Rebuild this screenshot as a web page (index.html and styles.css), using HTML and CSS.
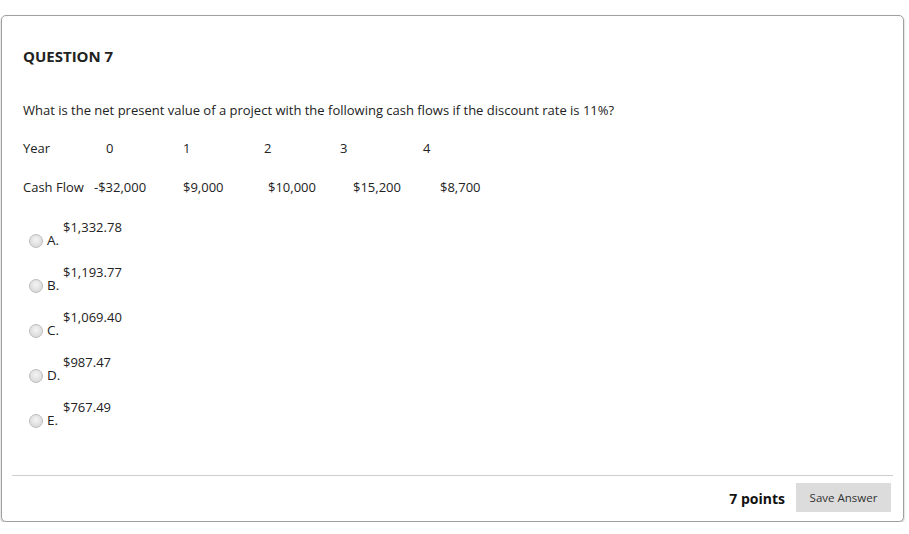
FILE: index.html
```html
<!DOCTYPE html>
<html>
<head>
<meta charset="utf-8">
<link rel="stylesheet" href="styles.css">
</head>
<body>
<div class="card">
  <div class="content">
    <h2 class="qtitle">QUESTION 7</h2>
    <p class="qtext">What is the net present value of a project with the following cash flows if the discount rate is 11%?</p>
    <div class="flows">
      <div class="cell">Year</div>
      <div class="cell y1">0</div>
      <div class="cell">1</div>
      <div class="cell">2</div>
      <div class="cell">3</div>
      <div class="cell">4</div>
      <div class="cell cf">Cash Flow</div>
      <div class="cell cf">-$32,000</div>
      <div class="cell cf">$9,000</div>
      <div class="cell cf c3">$10,000</div>
      <div class="cell cf c4">$15,200</div>
      <div class="cell cf c5">$8,700</div>
    </div>
    <ul class="answers">
      <li class="answer"><span class="radio"></span><span class="letter">A.</span><span class="value">$1,332.78</span></li>
      <li class="answer"><span class="radio"></span><span class="letter">B.</span><span class="value">$1,193.77</span></li>
      <li class="answer"><span class="radio"></span><span class="letter">C.</span><span class="value">$1,069.40</span></li>
      <li class="answer"><span class="radio"></span><span class="letter">D.</span><span class="value">$987.47</span></li>
      <li class="answer"><span class="radio"></span><span class="letter">E.</span><span class="value">$767.49</span></li>
    </ul>
  </div>
  <div class="footer">
    <span class="points">7 points</span>
    <button class="save">Save Answer</button>
  </div>
</div>
</body>
</html>
```
FILE: styles.css
```css
html, body {
  margin: 0;
  background: #fff;
}
body {
  padding: 15px 5px 0 1px;
  font-family: "Open Sans", "DejaVu Sans", sans-serif;
  color: #222;
  font-size: 13px;
}
.card {
  width: 901px;
  height: 505px;
  border: 1px solid #a0a0a0;
  border-radius: 5px;
  box-shadow: 0 1px 2px rgba(0,0,0,0.35);
  display: flex;
  flex-direction: column;
  box-sizing: content-box;
}
.content {
  flex: 1;
  padding: 0 0 0 21px;
}
.qtitle {
  margin: 29px 0 0;
  font-size: 15px;
  font-weight: 700;
  line-height: 22px;
  color: #222;
}
.qtext {
  margin: 34px 0 0;
  line-height: 18px;
}
.flows {
  margin-top: 20px;
  display: grid;
  grid-template-columns: 71px 89px 81px 76px 83px 60px;
  grid-auto-rows: 18px;
  row-gap: 21px;
  line-height: 18px;
}
.y1 { padding-left: 12px; }
.c3 { padding-left: 4px; }
.c4 { padding-left: 13px; }
.c5 { padding-left: 17px; }
.answers {
  list-style: none;
  margin: 30px 0 0;
  padding: 0 0 0 6px;
}
.answer {
  display: flex;
  align-items: flex-start;
  height: 45px;
}
.radio {
  width: 12px;
  height: 12px;
  border: 1px solid #bdbdbd;
  border-radius: 50%;
  background: radial-gradient(circle at 50% 40%, #f4f4f4 0%, #dcdcdc 70%, #cfcfcf 100%);
  margin-top: 8px;
  flex: none;
}
.letter {
  margin-left: 4px;
  margin-top: 5px;
  width: 16px;
  line-height: 18px;
  font-size: 13.5px;
}
.value {
  line-height: 18px;
  margin-top: -8px;
}
.footer {
  margin: 0 10px 0 10px;
  border-top: 1px solid #cfcfcf;
  height: 45px;
  display: flex;
  align-items: center;
  justify-content: flex-end;
  padding-top: 0;
}
.points {
  font-size: 14px;
  font-weight: 700;
  color: #111;
  margin-right: 11px;
}
.save {
  font-family: "Open Sans", "DejaVu Sans", sans-serif;
  font-size: 11.5px;
  color: #333;
  background: #dcdcdc;
  border: none;
  width: 95px;
  height: 29px;
  padding: 0;
  margin-right: 2px;
  margin-bottom: 3px;
}
```
